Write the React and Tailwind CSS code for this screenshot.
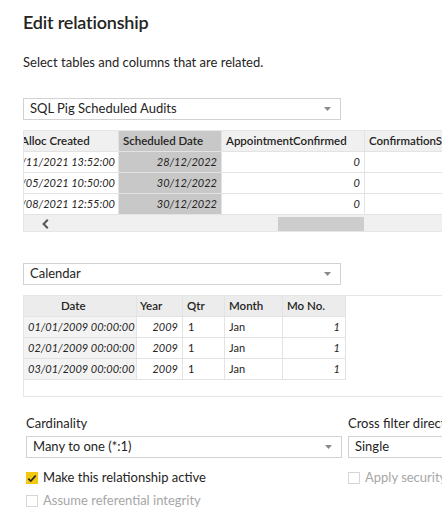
import React from "react";

const font = { fontFamily: '"Lato", "Open Sans", sans-serif' };

const Caret = () => (
  <svg width="7" height="4" viewBox="0 0 7 4" className="shrink-0">
    <path d="M0 0 L7 0 L3.5 4 Z" fill="#8a8a8a" />
  </svg>
);

const Select = ({ value, className = "" }) => (
  <div
    className={`h-[22px] border border-[#d2d2d2] bg-white flex items-center justify-between pl-[6px] pr-[9px] text-[13px] text-[#252423] ${className}`}
  >
    <span className="whitespace-nowrap">{value}</span>
    <Caret />
  </div>
);

const Check = ({ checked, disabled, label }) => (
  <div className="flex items-center h-[16px]">
    {checked ? (
      <div className="w-[12px] h-[12px] shrink-0 bg-[#f2c811] flex items-center justify-center">
        <svg width="10" height="9" viewBox="0 0 10 9">
          <path d="M1.3 4.6 L3.8 7 L8.7 1.6" stroke="#252423" strokeWidth="1.6" fill="none" />
        </svg>
      </div>
    ) : (
      <div className="w-[12px] h-[12px] shrink-0 border border-[#d6d6d6] bg-white" />
    )}
    <span
      className={`ml-[5px] text-[13px] whitespace-nowrap ${
        disabled ? "text-[#a6a6a6]" : "text-[#252423]"
      }`}
    >
      {label}
    </span>
  </div>
);

const audits = [
  ["/11/2021 13:52:00", "28/12/2022", "0"],
  ["/05/2021 10:50:00", "30/12/2022", "0"],
  ["/08/2021 12:55:00", "30/12/2022", "0"],
];

const calendar = [
  ["01/01/2009 00:00:00", "2009", "1", "Jan", "1"],
  ["02/01/2009 00:00:00", "2009", "1", "Jan", "1"],
  ["03/01/2009 00:00:00", "2009", "1", "Jan", "1"],
];

const cell =
  "h-[21px] shrink-0 flex items-center border-b border-r border-[#e3e3e3] whitespace-nowrap overflow-hidden";

export default function App() {
  return (
    <div className="w-[442px] h-[521px] bg-white overflow-hidden text-[#252423]" style={font}>
      <div className="pl-[23px] pt-[8px]">
        <h1 className="text-[18px] font-semibold leading-[28px] tracking-[-0.2px] text-[#252423]">
          Edit relationship
        </h1>
        <p className="mt-[17px] text-[13px] leading-[18px]">Select tables and columns that are related.</p>

        {/* first table */}
        <Select value="SQL Pig Scheduled Audits" className="mt-[27px] w-[318px]" />
        <div className="mt-[10px] w-[430px] h-[102px] border border-[#e6e6e6] overflow-hidden text-[11px]">
          <div className="flex bg-[#f0f0f0] font-semibold text-[11.5px]">
            <div className={`${cell} w-[95px]`}>
              <span className="ml-[-3px]">Alloc Created</span>
            </div>
            <div className={`${cell} w-[103px] pl-[4px] bg-[#c8c8c8]`}>Scheduled Date</div>
            <div className={`${cell} w-[143px] pl-[4px]`}>AppointmentConfirmed</div>
            <div className={`${cell} w-[120px] pl-[4px] border-r-0`}>ConfirmationStatus</div>
          </div>
          {audits.map((r, i) => (
            <div key={i} className="flex italic">
              <div className={`${cell} w-[95px] justify-end pr-[3px] bg-white`}>{r[0]}</div>
              <div className={`${cell} w-[103px] justify-end pr-[4px] bg-[#c8c8c8] border-[#d9d9d9]`}>{r[1]}</div>
              <div className={`${cell} w-[143px] justify-end pr-[4px] bg-white`}>{r[2]}</div>
              <div className={`${cell} w-[120px] bg-white border-r-0`} />
            </div>
          ))}
          <div className="h-[18px] bg-[#f0f0f0] flex items-center">
            <div className="w-[254px] shrink-0 flex items-center pl-[18px]">
              <svg width="7" height="10" viewBox="0 0 7 10">
                <path d="M5.8 0.8 L1.6 5 L5.8 9.2" stroke="#555" strokeWidth="2" fill="none" />
              </svg>
            </div>
            <div className="w-[86px] h-[15px] shrink-0 bg-[#cdcdcd]" />
          </div>
        </div>

        {/* second table */}
        <Select value="Calendar" className="mt-[31px] w-[318px]" />
        <div className="mt-[10px] w-[430px] h-[102px] border border-[#e6e6e6] overflow-hidden text-[11px]">
          <div className="flex font-semibold text-[11.5px]">
            <div className={`${cell} w-[113px] pl-[37px] bg-[#ececec]`}>Date</div>
            <div className={`${cell} w-[46px] pl-[3px] bg-[#ececec]`}>Year</div>
            <div className={`${cell} w-[42px] pl-[4px] bg-[#ececec]`}>Qtr</div>
            <div className={`${cell} w-[58px] pl-[4px] bg-[#ececec]`}>Month</div>
            <div className={`${cell} w-[63px] pl-[4px] bg-[#ececec]`}>Mo No.</div>
          </div>
          {calendar.map((r, i) => (
            <div key={i} className="flex">
              <div className={`${cell} w-[113px] pl-[4px] italic bg-[#f3f3f3]`}>{r[0]}</div>
              <div className={`${cell} w-[46px] justify-end pr-[4px] italic`}>{r[1]}</div>
              <div className={`${cell} w-[42px] pl-[5px]`}>{r[2]}</div>
              <div className={`${cell} w-[58px] pl-[4px]`}>{r[3]}</div>
              <div className={`${cell} w-[63px] justify-end pr-[5px] italic`}>{r[4]}</div>
            </div>
          ))}
        </div>
      </div>

      {/* options */}
      <div className="mt-[17px] pl-[26px] flex">
        <div className="w-[322px] shrink-0">
          <div className="text-[13px] leading-[18px]">Cardinality</div>
          <Select value="Many to one (*:1)" className="mt-[4px] w-[316px]" />
          <div className="mt-[12px]">
            <Check checked label="Make this relationship active" />
          </div>
          <div className="mt-[7px]">
            <Check disabled label="Assume referential integrity" />
          </div>
        </div>
        <div className="w-[110px] shrink-0">
          <div className="text-[13px] leading-[18px] whitespace-nowrap">Cross filter direction</div>
          <div className="mt-[4px] w-[140px] h-[22px] border border-[#d2d2d2] flex items-center pl-[6px] text-[13px]">
            Single
          </div>
          <div className="mt-[12px]">
            <Check disabled label="Apply security filter in both directions" />
          </div>
        </div>
      </div>
    </div>
  );
}
